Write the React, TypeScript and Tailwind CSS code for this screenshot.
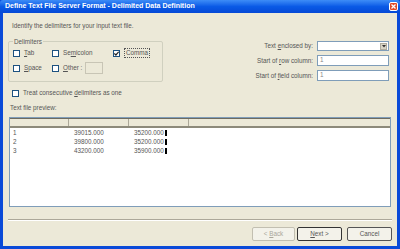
import React from 'react';

const Check = ({ checked = false }: { checked?: boolean }) => (
  <span className="w-[7px] h-[7px] border border-[#1c5180] bg-white flex items-center justify-center shrink-0">
    {checked && (
      <svg width="5" height="5" viewBox="0 0 5 5">
        <path d="M0.3 2.4 L1.9 4 L4.7 0.8" stroke="#222" strokeWidth="1.2" fill="none" />
      </svg>
    )}
  </span>
);

const Opt = ({ label, checked, focus, w }: { label: React.ReactNode; checked?: boolean; focus?: boolean; w: string }) => (
  <div className={`flex items-center gap-[4px] ${w}`}>
    <Check checked={checked} />
    <span className={focus ? 'border border-dotted border-[#555] px-[1px] leading-[8px]' : 'leading-[8px]'}>{label}</span>
  </div>
);

const Field = ({ label, value, combo }: { label: React.ReactNode; value?: string; combo?: boolean }) => (
  <div className="flex items-center justify-end gap-[4px]">
    <span>{label}</span>
    <div className={`w-[72px] ${combo ? 'h-[10px]' : 'h-[11px]'} border border-[#7f9db9] bg-white flex items-center justify-between pl-[2px] pr-[1px]`}>
      <span className="text-[#888] leading-none">{value}</span>
      {combo && (
        <span className="w-[7px] h-[7px] bg-[#d9d5c6] border border-[#b0ad9f] flex items-center justify-center">
          <svg width="4" height="3" viewBox="0 0 4 3"><path d="M0 0 L4 0 L2 2.5 Z" fill="#333" /></svg>
        </span>
      )}
    </div>
  </div>
);

export default function App() {
  const rows = [
    ['1', '39015.000', '35200.000'],
    ['2', '39800.000', '35200.000'],
    ['3', '43200.000', '35900.000'],
  ];
  return (
    <div
      className="w-[400px] h-[249px] flex flex-col bg-[#0a4ad8] text-[6.3px] text-[#555]"
      style={{ fontFamily: '"Liberation Sans", Arial, sans-serif' }}
    >
      <div className="h-[13px] shrink-0 flex items-center justify-between pl-[5px] pr-[2px] rounded-t-[3px] bg-gradient-to-b from-[#3d8cf7] via-[#0a5ae6] to-[#0649d6]">
        <span className="text-white font-bold text-[7px]">Define Text File Server Format - Delimited Data Definition</span>
        <span className="w-[9px] h-[9px] rounded-[2px] bg-[#e04a2a] border border-white flex items-center justify-center">
          <svg width="5" height="5" viewBox="0 0 5 5"><path d="M0.5 0.5 L4.5 4.5 M4.5 0.5 L0.5 4.5" stroke="white" strokeWidth="1.3" /></svg>
        </span>
      </div>
      <div className="h-[233px] shrink-0 mx-[3px] bg-[#ece9d8] flex flex-col px-[5px]">
        <div className="mt-[8px] ml-[4px] h-[10px] leading-[10px]">Identify the delimiters for your input text file.</div>
        <div className="flex justify-between mt-[10px]">
          <div className="relative w-[155px] h-[41px] border border-[#d0d0bf] rounded-[2px] flex flex-col gap-[5px] pl-[4px] pt-[7px]">
            <span className="absolute -top-[5px] left-[4px] bg-[#ece9d8] px-[1px] leading-[9px]">Delimiters</span>
            <div className="flex h-[8px] items-center">
              <Opt w="w-[39px]" label={<><u>T</u>ab</>} />
              <Opt w="w-[61px]" label={<>Se<u>m</u>icolon</>} />
              <Opt w="w-[40px]" checked focus label="Comma" />
            </div>
            <div className="flex items-center h-[12px]">
              <Opt w="w-[39px]" label={<><u>S</u>pace</>} />
              <Opt w="w-[33px]" label={<><u>O</u>ther :</>} />
              <div className="w-[18px] h-[12px] border border-[#c8c5b5] bg-[#ece9d8]" />
            </div>
          </div>
          <div className="flex flex-col gap-[4px] pr-[3px]">
            <Field combo label={<>Text <u>e</u>nclosed by:</>} />
            <Field value="1" label={<>Start of <u>r</u>ow column:</>} />
            <Field value="1" label={<>Start of <u>f</u>ield column:</>} />
          </div>
        </div>
        <div className="flex items-center gap-[4px] mt-[7px] ml-[4px] h-[8px]">
          <Check />
          <span>Treat consecutive <u>d</u>elimiters as one</span>
        </div>
        <div className="mt-[6px] ml-[2px] h-[10px] leading-[10px]">Text file preview:</div>
        <div className="mt-[4px] mx-[1px] h-[90px] border border-[#7f9db9] bg-white flex flex-col">
          <div className="flex h-[10px] bg-[#ece9d8] border-b-[2px] border-[#8d8a7b] border-t border-t-[#6d6b60]">
            <div className="w-[59px] border-r border-[#aca899]" />
            <div className="w-[60px] border-r border-[#aca899]" />
            <div className="w-[60px] border-r border-[#aca899]" />
            <div className="flex-1" />
          </div>
          <div className="flex flex-col leading-[9px]">
            {rows.map((r) => (
              <div key={r[0]} className="flex">
                <span className="w-[61px] pl-[3px]">{r[0]}</span>
                <span className="w-[60px] pl-[3px]">{r[1]}</span>
                <span className="pl-[3px] flex items-center">
                  {r[2]}
                  <span className="w-[2px] h-[6px] bg-black ml-[1px]" />
                </span>
              </div>
            ))}
          </div>
        </div>
        <div className="mt-[12px] border-t border-[#aca899] border-b border-b-white" />
        <div className="flex justify-end mt-[6px]">
          <button className="w-[43px] h-[14px] border border-[#c2bfb1] rounded-[2px] bg-[#f3f2ea] text-[#aaa79a]">&lt; <u>B</u>ack</button>
          <button className="w-[45px] h-[14px] border border-[#333] rounded-[2px] bg-[#f3f2ea] text-[#555] ml-[2px]"><u>N</u>ext &gt;</button>
          <button className="w-[45px] h-[14px] border border-[#555] rounded-[2px] bg-[#f3f2ea] text-[#555] ml-[5px]">Cancel</button>
        </div>
      </div>
    </div>
  );
}
